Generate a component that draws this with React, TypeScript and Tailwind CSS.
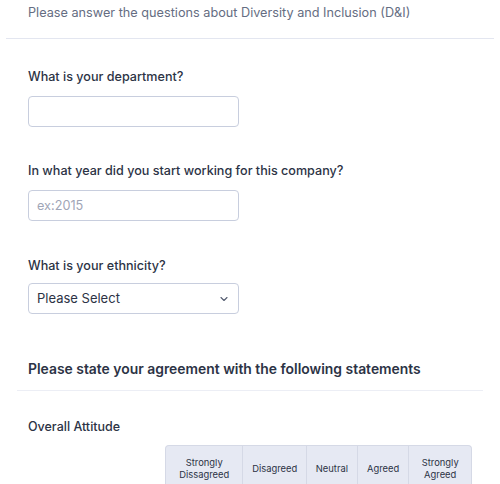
import React from "react"
import { ChevronDown } from "lucide-react"

const columns = [
  { label: "Strongly Dissagreed", w: "w-[77px]" },
  { label: "Disagreed", w: "w-[64px]" },
  { label: "Neutral", w: "w-[51px]" },
  { label: "Agreed", w: "w-[52px]" },
  { label: "Strongly Agreed", w: "w-[63px]" },
]

export default function App() {
  return (
    <div className="min-h-screen bg-white text-[#2c3345]" style={{ fontFamily: "Inter, 'Noto Sans', sans-serif" }}>
      <div className="px-7 pt-[3px]">
        <p className="text-[12.7px] leading-5 text-[#656d82]">
          Please answer the questions about Diversity and Inclusion (D&amp;I)
        </p>
      </div>
      <div className="mx-1.5 mt-[15px] h-px bg-[#e3e6f0]" />

      <div className="px-7">
        <label className="mt-[28px] block text-[12.6px] font-medium leading-5">What is your department?</label>
        <input
          type="text"
          className="mt-[9px] block h-[31px] w-[211px] rounded border border-[#c8cede] px-2 text-[13px] outline-none"
        />

        <label className="mt-[34px] block text-[12.6px] font-medium leading-5">
          In what year did you start working for this company?
        </label>
        <input
          type="text"
          placeholder="ex:2015"
          className="mt-[9px] block h-[31px] w-[211px] rounded border border-[#c8cede] px-2 text-[12.7px] outline-none placeholder:text-[#a0a5b6]"
        />

        <label className="mt-[35px] block text-[12.6px] font-medium leading-5">What is your ethnicity?</label>
        <div className="mt-[7px] flex h-[31px] w-[211px] items-center justify-between rounded border border-[#c8cede] pl-2 pr-[8px]">
          <span className="text-[13px] text-[#2c3345]">Please Select</span>
          <ChevronDown size={12} strokeWidth={2.2} className="text-[#545c70]" />
        </div>
      </div>

      <div className="px-7 mt-[43px]">
        <h2 className="text-[13.9px] font-semibold leading-6">Please state your agreement with the following statements</h2>
      </div>
      <div className="mx-[17px] mt-[9px] h-px bg-[#eceef5]" />

      <div className="px-7">
        <p className="mt-[26px] text-[12.5px] font-medium leading-5">Overall Attitude</p>
        <div className="mt-[8px] flex">
          <div className="w-[137px] shrink-0" />
          <div className="flex overflow-hidden rounded-t border border-b-0 border-[#d5d9e6] bg-[#e6e9f3]">
            {columns.map((c, i) => (
              <div
                key={c.label}
                className={`${c.w} flex h-[46px] items-center justify-center px-1 text-center text-[9.4px] leading-[12px] text-[#2c3345] ${
                  i > 0 ? "border-l border-[#d5d9e6]" : ""
                }`}
              >
                {c.label}
              </div>
            ))}
          </div>
        </div>
      </div>
    </div>
  )
}
